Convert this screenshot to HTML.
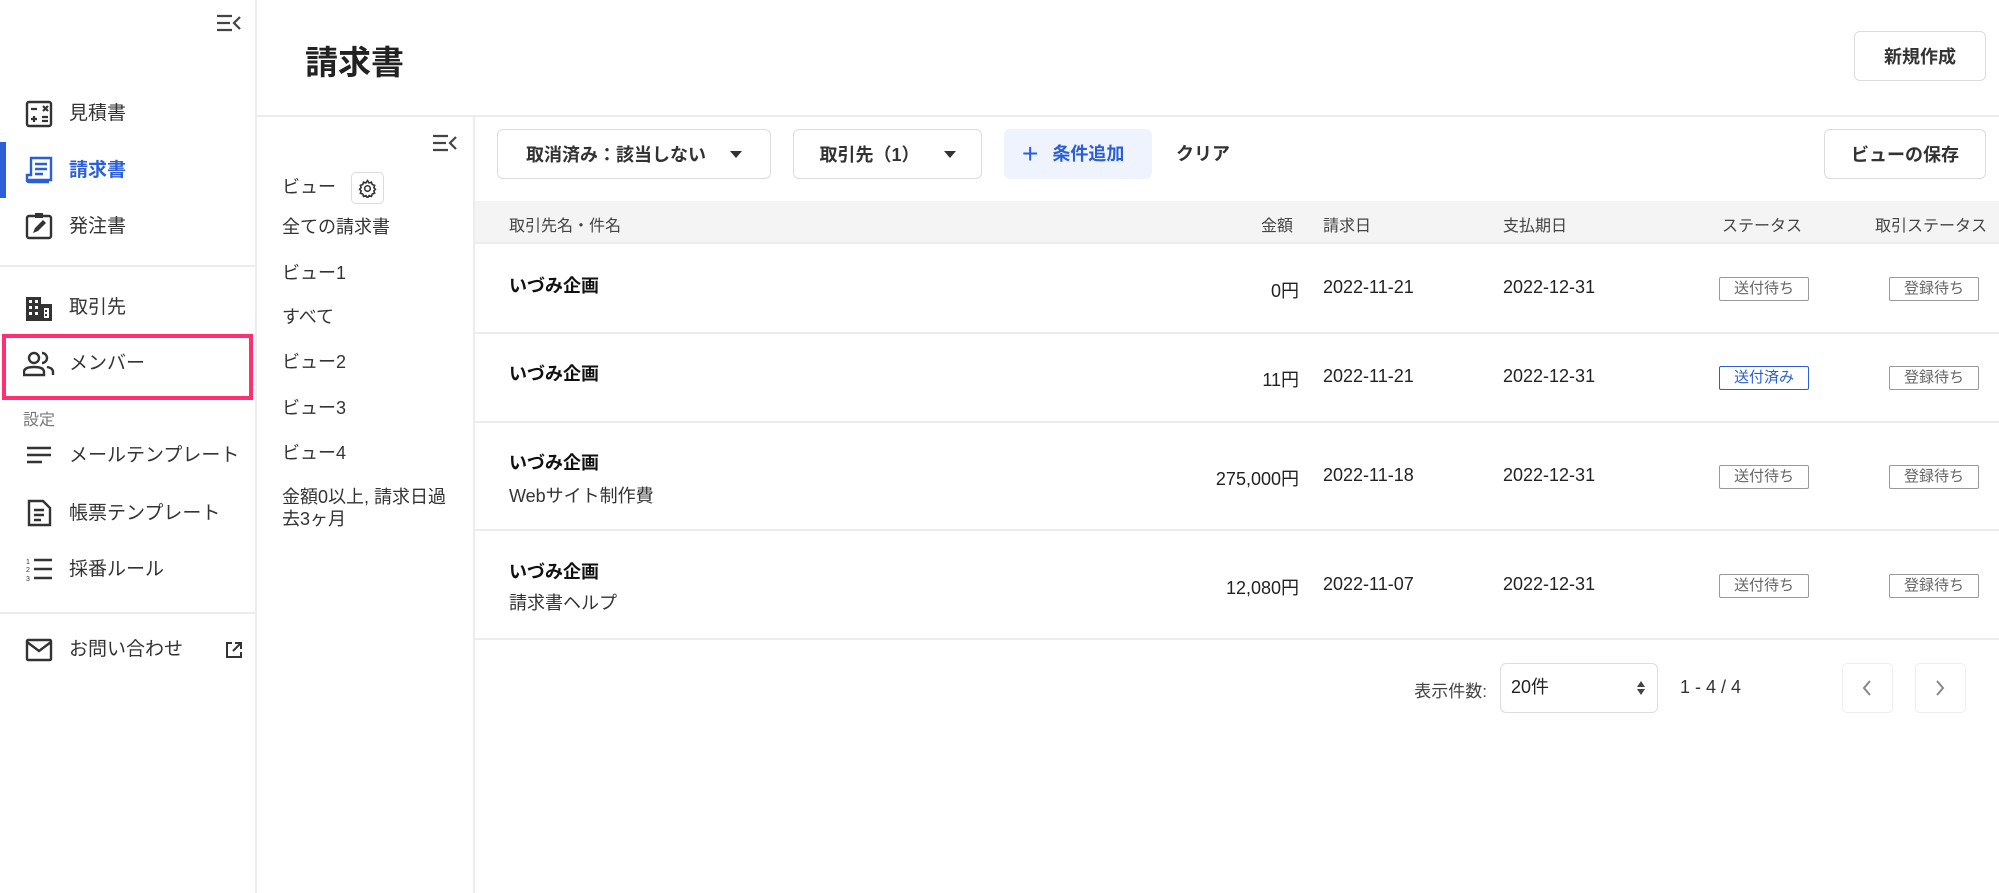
<!DOCTYPE html>
<html><head><meta charset="utf-8">
<style>
*{box-sizing:border-box;margin:0;padding:0}
body{width:1999px;height:893px;background:#fff;font-family:"Liberation Sans","Noto Sans CJK JP",sans-serif;color:#222;position:relative;overflow:hidden}
.a{position:absolute;white-space:nowrap}
.side{position:absolute;left:0;top:0;width:257px;height:893px;border-right:2px solid #ececec}
.nav{position:absolute;left:69px;font-size:19px;color:#333;line-height:24px}
.ic{position:absolute;left:25px;width:28px;height:28px}
.hline{position:absolute;height:2px;background:#ececec}
.btn{position:absolute;border:1.5px solid #dcdcdc;border-radius:6px;background:#fff;font-size:18px;font-weight:bold;color:#333;display:flex;align-items:center;justify-content:center}
.vl{position:absolute;left:282px;font-size:18px;color:#333;line-height:22px}
.th{position:absolute;top:212px;font-size:16px;color:#444}
.td{position:absolute;font-size:18px;color:#222}
.nm{position:absolute;left:509px;font-size:18px;font-weight:bold;color:#111}
.sub{position:absolute;left:509px;font-size:18px;color:#333}
.bd{position:absolute;width:90px;height:24px;border:1.5px solid #999;border-radius:2px;font-size:15px;color:#666;text-align:center;line-height:21px}
.bd.s{left:1719px}.bd.r{left:1889px}
.bd.b{border-color:#2a5fd8;color:#2a5fd8}
.caret{display:inline-block;width:0;height:0;border-left:6px solid transparent;border-right:6px solid transparent;border-top:7px solid #333;margin-left:24px}
</style></head><body>

<div class="side">
<svg class="a" style="left:216px;top:13px" width="26" height="20" viewBox="0 0 26 20"><path d="M1 3h15M1 10h13M1 17h15M24 4l-6 6 6 6" stroke="#444" stroke-width="2.2" fill="none"/></svg>

<svg class="ic" style="top:100px" viewBox="0 0 28 28"><rect x="2" y="2" width="24" height="24" rx="2" fill="none" stroke="#333" stroke-width="2.4"/><path d="M6 9h6M18 6l5 5M23 6l-5 5M6 19h6M9 16v6M17 17h6M17 21h6" stroke="#333" stroke-width="2.2"/></svg>
<div class="nav" style="top:102px">見積書</div>

<div class="a" style="left:0;top:142px;width:6px;height:56px;background:#2a5fd8"></div>
<svg class="ic" style="top:156px" viewBox="0 0 28 28"><path d="M6 2h20v22H2v-5h4zM10 8h12M10 13h12M10 18h8M2 24q0 2 2 2h20" stroke="#2a5fd8" stroke-width="2.4" fill="none"/></svg>
<div class="nav" style="top:159px;color:#2a5fd8;font-weight:bold">請求書</div>

<svg class="ic" style="top:212px" viewBox="0 0 28 28"><rect x="2" y="4" width="24" height="22" rx="2" fill="none" stroke="#333" stroke-width="2.4"/><rect x="10" y="1" width="8" height="5" fill="#333"/><path d="M8 21l2-5 8-8 3 3-8 8z" fill="#333"/></svg>
<div class="nav" style="top:215px">発注書</div>

<div class="hline" style="left:0;top:265px;width:257px"></div>

<svg class="ic" style="top:294px" viewBox="0 0 28 28"><path d="M1 3h15v24H1zM16 10h11v17H16z" fill="#333"/><g fill="#fff"><rect x="4" y="6" width="3" height="3"/><rect x="10" y="6" width="3" height="3"/><rect x="4" y="12" width="3" height="3"/><rect x="10" y="12" width="3" height="3"/><rect x="4" y="18" width="3" height="3"/><rect x="10" y="18" width="3" height="3"/><rect x="19" y="14" width="5" height="10"/></g><rect x="20" y="16" width="2" height="2" fill="#333"/><rect x="20" y="20" width="2" height="2" fill="#333"/></svg>
<div class="nav" style="top:296px">取引先</div>

<div class="a" style="left:2px;top:334px;width:251px;height:66px;border:4px solid #ff2f72"></div>
<svg class="ic" style="left:23px;top:350px;width:32px" viewBox="0 0 32 28"><circle cx="11" cy="8" r="5" fill="none" stroke="#333" stroke-width="2.4"/><path d="M1 25v-3q0-5 10-5t10 5v3z" fill="none" stroke="#333" stroke-width="2.4"/><path d="M19 3a5 5 0 010 10M24 17q6 1 6 5v3" fill="none" stroke="#333" stroke-width="2.4"/></svg>
<div class="nav" style="top:352px">メンバー</div>

<div class="a" style="left:23px;top:406px;font-size:16px;color:#777">設定</div>

<svg class="ic" style="top:441px" viewBox="0 0 28 28"><path d="M2 7h24M2 14h24M2 21h15" stroke="#333" stroke-width="2.6"/></svg>
<div class="nav" style="top:444px">メールテンプレート</div>

<svg class="ic" style="top:499px" viewBox="0 0 28 28"><path d="M4 2h14l7 7v17H4z M9 11h10M9 16h10M9 21h7" stroke="#333" stroke-width="2.4" fill="none"/></svg>
<div class="nav" style="top:502px">帳票テンプレート</div>

<svg class="ic" style="top:555px" viewBox="0 0 28 28"><path d="M9 5h18M9 14h18M9 23h18" stroke="#333" stroke-width="2.6"/><text x="1" y="9" font-size="7" font-family="Liberation Sans" fill="#333">1</text><text x="1" y="17" font-size="7" font-family="Liberation Sans" fill="#333">2</text><text x="1" y="26" font-size="7" font-family="Liberation Sans" fill="#333">3</text></svg>
<div class="nav" style="top:558px">採番ルール</div>

<div class="hline" style="left:0;top:612px;width:257px"></div>

<svg class="ic" style="top:636px" viewBox="0 0 28 28"><rect x="2" y="4" width="24" height="20" rx="1" fill="none" stroke="#333" stroke-width="2.4"/><path d="M2 6l12 9 12-9" fill="none" stroke="#333" stroke-width="2.4"/></svg>
<div class="nav" style="top:638px">お問い合わせ</div>
<svg class="a" style="left:225px;top:641px" width="18" height="18" viewBox="0 0 18 18"><path d="M7 2H2v14h14v-5M10 2h6v6M16 2L8 10" stroke="#333" stroke-width="2" fill="none"/></svg>
</div>

<div class="a" style="left:305px;top:36px;font-size:33px;font-weight:bold;color:#222">請求書</div>
<div class="btn" style="left:1854px;top:31px;width:132px;height:50px">新規作成</div>
<div class="hline" style="left:257px;top:115px;width:1742px"></div>

<div class="a" style="left:473px;top:116px;width:2px;height:777px;background:#ececec"></div>
<svg class="a" style="left:432px;top:133px" width="26" height="20" viewBox="0 0 26 20"><path d="M1 3h15M1 10h13M1 17h15M24 4l-6 6 6 6" stroke="#444" stroke-width="2.2" fill="none"/></svg>

<div class="vl" style="top:176px">ビュー</div>
<div class="a" style="left:351px;top:172px;width:33px;height:32px;border:1.5px solid #ddd;border-radius:5px"></div>
<svg class="a" style="left:358px;top:179px" width="19" height="19" viewBox="0 0 24 24"><path d="M12 2l2 3 3-1 1 3 3 1-1 3 2 2-2 2 1 3-3 1-1 3-3-1-2 3-2-3-3 1-1-3-3-1 1-3-2-2 2-2-1-3 3-1 1-3 3 1z" fill="none" stroke="#333" stroke-width="2"/><circle cx="12" cy="12" r="3.5" fill="none" stroke="#333" stroke-width="2"/></svg>
<div class="vl" style="top:216px">全ての請求書</div>
<div class="vl" style="top:262px">ビュー1</div>
<div class="vl" style="top:306px">すべて</div>
<div class="vl" style="top:351px">ビュー2</div>
<div class="vl" style="top:397px">ビュー3</div>
<div class="vl" style="top:442px">ビュー4</div>
<div class="vl" style="top:486px">金額0以上, 請求日過<br>去3ヶ月</div>

<div class="btn" style="left:497px;top:129px;width:274px;height:50px">取消済み：該当しない<span class="caret"></span></div>
<div class="btn" style="left:793px;top:129px;width:189px;height:50px">取引先（1）<span class="caret"></span></div>
<div class="a" style="left:1004px;top:129px;width:148px;height:50px;background:#eef3fd;border-radius:6px;color:#2a5fd8;font-size:18px;font-weight:bold;line-height:50px;padding-left:18px"><span style="font-size:28px;font-weight:normal;vertical-align:-3px;margin-right:14px">+</span>条件追加</div>
<div class="a" style="left:1176px;top:140px;font-size:18px;font-weight:bold;color:#333">クリア</div>
<div class="btn" style="left:1824px;top:129px;width:162px;height:50px">ビューの保存</div>

<div class="a" style="left:475px;top:201px;width:1524px;height:43px;background:#f5f4f5;border-bottom:2px solid #ececec"></div>
<div class="th" style="left:509px">取引先名・件名</div>
<div class="th" style="left:1261px">金額</div>
<div class="th" style="left:1323px">請求日</div>
<div class="th" style="left:1503px">支払期日</div>
<div class="th" style="left:1722px">ステータス</div>
<div class="th" style="left:1875px">取引ステータス</div>

<div class="hline" style="left:475px;top:332px;width:1524px"></div>
<div class="hline" style="left:475px;top:421px;width:1524px"></div>
<div class="hline" style="left:475px;top:529px;width:1524px"></div>
<div class="hline" style="left:475px;top:638px;width:1524px"></div>

<div class="nm" style="top:272px">いづみ企画</div>
<div class="td" style="right:700px;top:277px">0円</div>
<div class="td" style="left:1323px;top:277px">2022-11-21</div>
<div class="td" style="left:1503px;top:277px">2022-12-31</div>
<div class="bd s" style="top:277px">送付待ち</div>
<div class="bd r" style="top:277px">登録待ち</div>

<div class="nm" style="top:360px">いづみ企画</div>
<div class="td" style="right:700px;top:366px">11円</div>
<div class="td" style="left:1323px;top:366px">2022-11-21</div>
<div class="td" style="left:1503px;top:366px">2022-12-31</div>
<div class="bd s b" style="top:366px">送付済み</div>
<div class="bd r" style="top:366px">登録待ち</div>

<div class="nm" style="top:449px">いづみ企画</div>
<div class="sub" style="top:482px">Webサイト制作費</div>
<div class="td" style="right:700px;top:465px">275,000円</div>
<div class="td" style="left:1323px;top:465px">2022-11-18</div>
<div class="td" style="left:1503px;top:465px">2022-12-31</div>
<div class="bd s" style="top:465px">送付待ち</div>
<div class="bd r" style="top:465px">登録待ち</div>

<div class="nm" style="top:558px">いづみ企画</div>
<div class="sub" style="top:589px">請求書ヘルプ</div>
<div class="td" style="right:700px;top:574px">12,080円</div>
<div class="td" style="left:1323px;top:574px">2022-11-07</div>
<div class="td" style="left:1503px;top:574px">2022-12-31</div>
<div class="bd s" style="top:574px">送付待ち</div>
<div class="bd r" style="top:574px">登録待ち</div>

<div class="a" style="right:512px;top:677px;font-size:17px;color:#444">表示件数:</div>
<div class="a" style="left:1500px;top:663px;width:158px;height:50px;border:1.5px solid #ddd;border-radius:6px;font-size:18px;line-height:47px;padding-left:10px;color:#222">20件<svg style="position:absolute;right:12px;top:17px" width="8" height="14" viewBox="0 0 8 14"><path d="M0 6l4-6 4 6zM0 8l4 6 4-6z" fill="#444"/></svg></div>
<div class="a" style="left:1680px;top:677px;font-size:18px;color:#333">1 - 4 / 4</div>
<div class="a" style="left:1842px;top:663px;width:51px;height:50px;border:1.5px solid #eee;border-radius:5px"></div>
<svg class="a" style="left:1861px;top:679px" width="12" height="18" viewBox="0 0 12 18"><path d="M9 2L3 9l6 7" stroke="#888" stroke-width="2" fill="none"/></svg>
<div class="a" style="left:1915px;top:663px;width:51px;height:50px;border:1.5px solid #eee;border-radius:5px"></div>
<svg class="a" style="left:1934px;top:679px" width="12" height="18" viewBox="0 0 12 18"><path d="M3 2l6 7-6 7" stroke="#888" stroke-width="2" fill="none"/></svg>
</body></html>
